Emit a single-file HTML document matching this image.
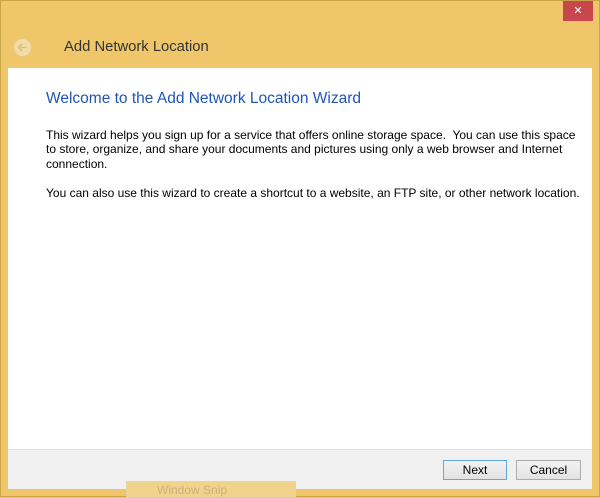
<!DOCTYPE html>
<html><head><meta charset="utf-8"><style>
*{margin:0;padding:0;box-sizing:border-box}
body{width:600px;height:497px;overflow:hidden;background:#efc76a;font-family:"Liberation Sans",sans-serif;position:relative}
.frame{position:absolute;left:0;top:0;width:600px;height:497px;border:1px solid #c9a24a}
.close{position:absolute;left:563px;top:1px;width:30px;height:20px;background:#c7474c;color:#fff;font-size:11px;text-align:center;line-height:20px}
.back{position:absolute;left:13px;top:38px;width:19px;height:19px;border-radius:50%;background:#f3dca3;border:1px solid #e0c98a}
.title{position:absolute;left:64px;top:39px;font-size:14.8px;color:#333}
.content{position:absolute;left:8px;top:68px;width:584px;height:381px;background:#fff}
.footer{position:absolute;left:8px;top:449px;width:584px;height:40px;background:#f0f0f0;border-top:1px solid #dfdfdf}
h1{position:absolute;left:38px;top:22px;font-weight:normal;font-size:15.5px;color:#1f55b5;white-space:nowrap}
.p{position:absolute;left:38px;font-size:12px;color:#000;line-height:14.3px;white-space:nowrap}
.btn{position:absolute;top:10px;height:20px;background:linear-gradient(#f2f2f2,#e3e3e3);border:1px solid #acacac;font-size:12px;text-align:center;line-height:18px;color:#000}
.snip{position:absolute;left:126px;top:481px;width:170px;height:16px;border:1px solid #e6d6a6;background:#f1d38c;color:#c9b07a;font-size:12px;padding-left:30px;line-height:16px}
</style></head><body>
<div class="frame"></div>
<div class="close">✕</div>
<div class="back"><svg width="19" height="19" viewBox="0 0 19 19" style="position:absolute;left:-1px;top:-1px"><path d="M13.5 9.5H5.5M9 6L5.5 9.5 9 13" stroke="#d9c182" stroke-width="1.6" fill="none"/></svg></div>
<div class="title">Add Network Location</div>
<div class="content">
<h1>Welcome to the Add Network Location Wizard</h1>
<div class="p" style="top:60px">This wizard helps you sign up for a service that offers online storage space.&nbsp; You can use this space<br>to store, organize, and share your documents and pictures using only a web browser and Internet<br>connection.</div>
<div class="p" style="top:118px">You can also use this wizard to create a shortcut to a website, an FTP site, or other network location.</div>
</div>
<div class="footer">
<div class="btn" style="left:435px;width:64px;border-color:#5fa8e8">Next</div>
<div class="btn" style="left:508px;width:65px">Cancel</div>
</div>
<div class="snip">Window Snip</div>
</body></html>
